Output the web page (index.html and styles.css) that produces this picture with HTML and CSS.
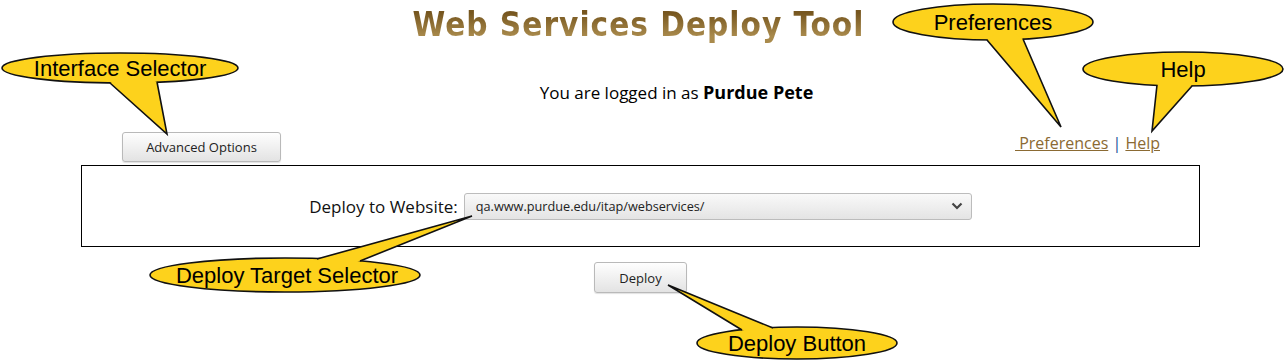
FILE: index.html
```html
<!DOCTYPE html>
<html>
<head>
<meta charset="utf-8">
<link rel="stylesheet" href="styles.css">
</head>
<body>
<div class="page">
  <h1 class="title"><span class="title-text">Web Services Deploy Tool</span></h1>
  <p class="login">You are logged in as <strong>Purdue Pete</strong></p>
  <div class="toolbar">
    <button class="btn btn-adv" type="button">Advanced Options</button>
    <div class="links"><a href="#">&nbsp;Preferences</a> <span class="sep">|</span> <a href="#">Help</a></div>
  </div>
  <div class="panel">
    <label class="field-label" for="site">Deploy to Website:</label>
    <div class="select" id="site">
      <span class="select-value">qa.www.purdue.edu/itap/webservices/</span>
      <svg class="chev" width="12" height="8" viewBox="0 0 12 8"><path d="M1.5 1.5 L6 6 L10.5 1.5" fill="none" stroke="#444" stroke-width="2.2"/></svg>
    </div>
  </div>
  <div class="actions">
    <button class="btn btn-deploy" type="button">Deploy</button>
  </div>

  <svg class="callouts" width="1287" height="363" viewBox="0 0 1287 363">
    <!-- Interface Selector -->
    <ellipse cx="120" cy="68" rx="118" ry="15" class="bub"/>
    <polygon points="110,83 167,134 157,82 133,70" class="tailfill"/>
    <polyline points="110,83 167,134 157,82" class="tailline"/>
    <text x="120" y="76" class="ctext">Interface Selector</text>

    <!-- Preferences -->
    <ellipse cx="993" cy="22" rx="100" ry="18" class="bub"/>
    <polygon points="987,40 1061,127 1023,39 1005,26" class="tailfill"/>
    <polyline points="987,40 1061,127 1023,39" class="tailline"/>
    <text x="993" y="30" class="ctext">Preferences</text>

    <!-- Help -->
    <ellipse cx="1183" cy="69" rx="100" ry="17" class="bub"/>
    <polygon points="1157,85 1152,131 1192,86 1175,73" class="tailfill"/>
    <polyline points="1157,85 1152,131 1192,86" class="tailline"/>
    <text x="1183" y="77" class="ctext">Help</text>

    <!-- Deploy Target Selector -->
    <ellipse cx="285" cy="275" rx="135" ry="17" class="bub"/>
    <polygon points="317,259 472,216 360,261 335,270" class="tailfill"/>
    <polyline points="317,259 472,216 360,261" class="tailline"/>
    <text x="287" y="283" class="ctext">Deploy Target Selector</text>

    <!-- Deploy Button -->
    <ellipse cx="797" cy="343" rx="100" ry="16" class="bub"/>
    <polygon points="742,330 668,285 773,328 760,338" class="tailfill"/>
    <polyline points="742,330 668,285 773,328" class="tailline"/>
    <text x="797" y="351" class="ctext">Deploy Button</text>
  </svg>
</div>
</body>
</html>
```

FILE: styles.css
```css
html, body {
  margin: 0;
  padding: 0;
  background: #ffffff;
}

.page {
  position: relative;
  width: 1287px;
  height: 363px;
  overflow: hidden;
  display: flex;
  flex-direction: column;
}

.title {
  margin: 7px 0 0 0;
  padding-right: 10px;
  text-align: center;
  font-family: "DejaVu Sans", sans-serif;
  font-stretch: condensed;
  font-weight: bold;
  font-size: 33px;
  letter-spacing: 1px;
  line-height: 36px;
}

.title-text {
  color: #8f6c36;
  background: linear-gradient(#76561f 20%, #a98a4c 80%);
  -webkit-background-clip: text;
  background-clip: text;
  -webkit-text-fill-color: transparent;
}

.login {
  margin: 39px 0 0 0;
  padding-left: 66px;
  text-align: center;
  font-family: "Open Sans", sans-serif;
  font-size: 17px;
  line-height: 20px;
  color: #000;
}

.login strong {
  font-size: 18px;
}

.toolbar {
  display: flex;
  justify-content: space-between;
  align-items: flex-end;
  margin-top: 29px;
  padding-left: 122px;
  padding-right: 127px;
}

.btn {
  font-family: "Open Sans", sans-serif;
  font-size: 13px;
  color: #222;
  background: linear-gradient(#fefefe, #e3e3e3);
  border: 1px solid #b9b9b9;
  border-radius: 3px;
  box-shadow: 0 1px 1px rgba(0,0,0,0.12);
  padding: 0;
}

.btn-adv {
  width: 159px;
  height: 30px;
}

.btn-deploy {
  width: 93px;
  height: 31px;
}

.links {
  font-family: "Open Sans", sans-serif;
  font-size: 16px;
  line-height: 20px;
  margin-bottom: 9px;
}

.links a {
  color: #8b6a33;
  text-decoration: underline;
}

.sep {
  color: #1a4f9a;
}

.panel {
  margin: 3px 87px 0 81px;
  height: 80px;
  border: 1px solid #000;
  display: flex;
  justify-content: center;
  align-items: center;
  gap: 6px;
}

.field-label {
  font-family: "Open Sans", sans-serif;
  font-size: 17px;
  color: #111;
}

.select {
  height: 25px;
  border: 1px solid #bcbcbc;
  border-radius: 3px;
  background: linear-gradient(#f9f9f9, #e4e4e4);
  display: flex;
  align-items: center;
  justify-content: space-between;
  padding: 0 8px 0 11px;
  width: 487px;
}

.select-value {
  font-family: "Open Sans", sans-serif;
  font-size: 12.7px;
  color: #222;
}

.actions {
  display: flex;
  justify-content: center;
  margin-top: 15px;
  padding-right: 6px;
}

.callouts {
  position: absolute;
  left: 0;
  top: 0;
  pointer-events: none;
}

.bub {
  fill: #fdd21c;
  stroke: #111;
  stroke-width: 1.6;
}

.tailfill {
  fill: #fdd21c;
}

.tailline {
  fill: none;
  stroke: #111;
  stroke-width: 1.6;
  stroke-linejoin: miter;
}

.ctext {
  font-family: "Liberation Sans", Arial, sans-serif;
  font-size: 22px;
  fill: #000;
  text-anchor: middle;
}
```
